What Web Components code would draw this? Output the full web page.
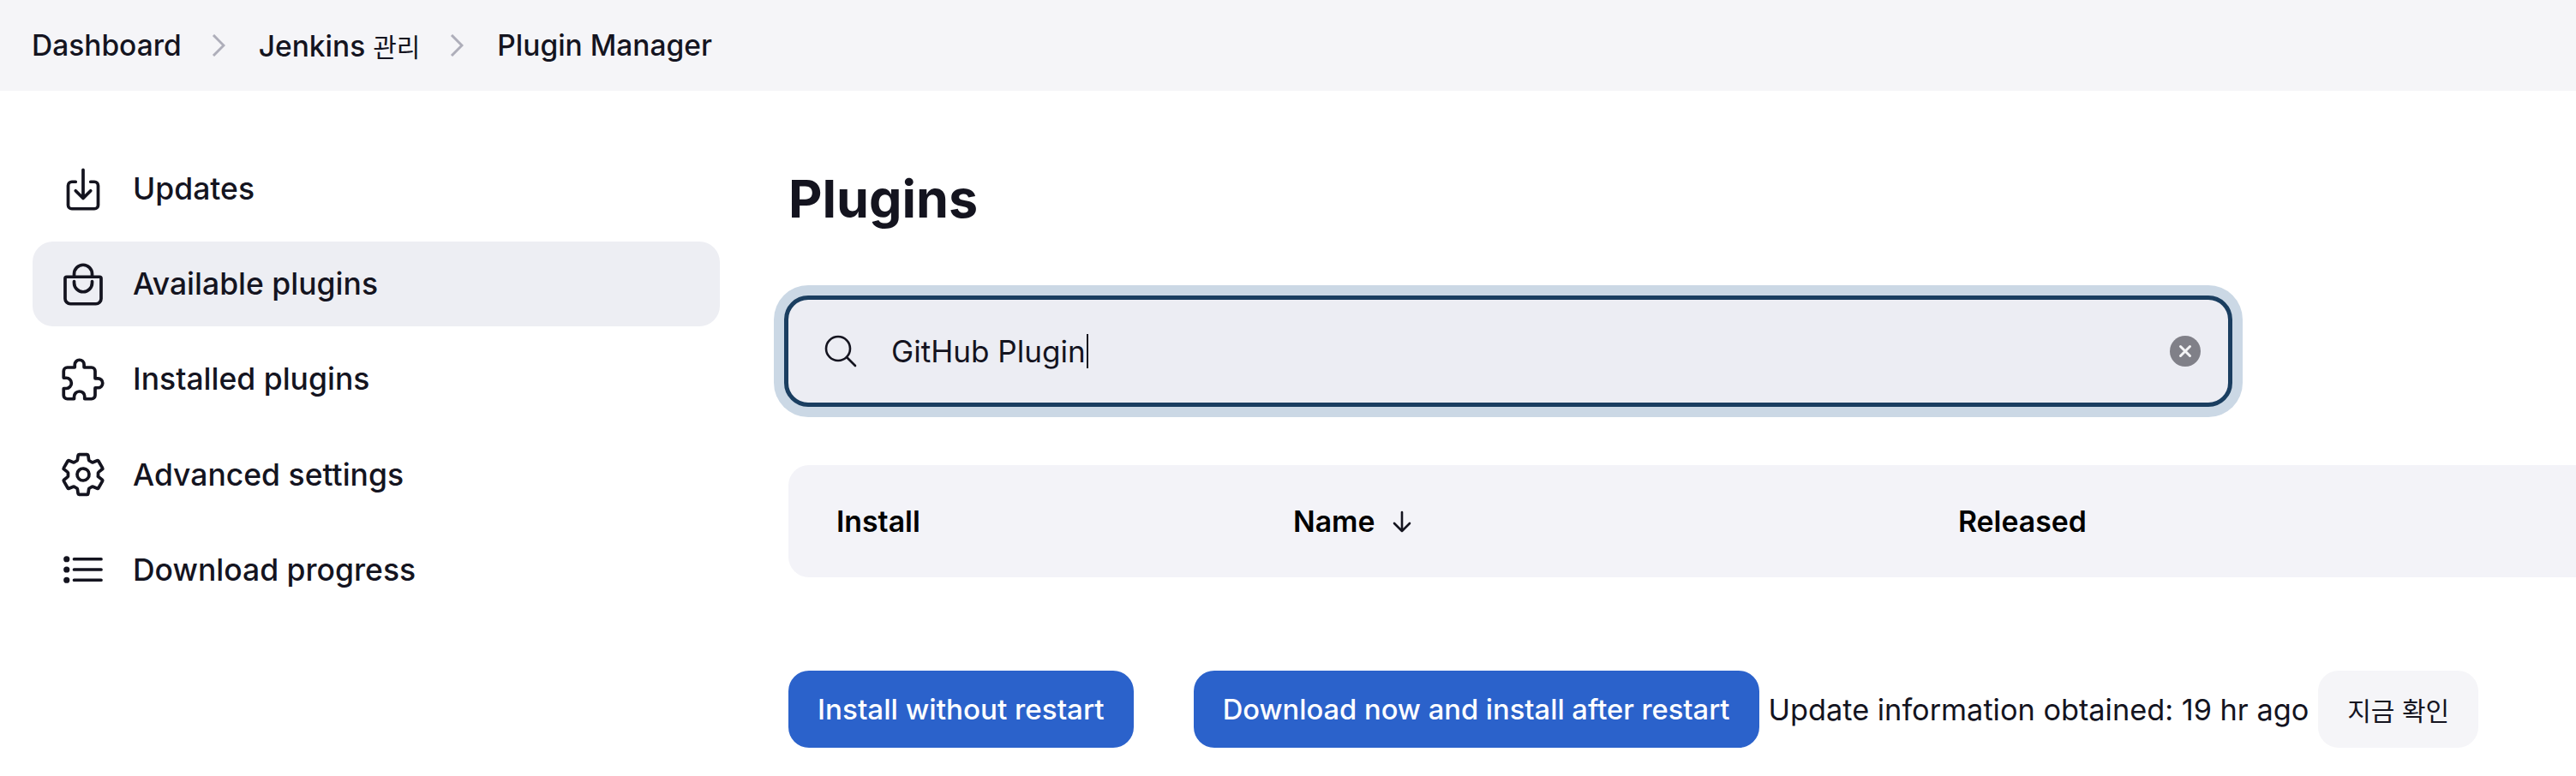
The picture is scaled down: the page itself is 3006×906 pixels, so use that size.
<!DOCTYPE html>
<html lang="en">
<head>
<meta charset="utf-8">
<title>Plugin Manager</title>
<style>
    html, body {
        margin: 0;
        overflow: hidden;
        background: #fff;
        color: #14141f;
        font-family: Inter, "Noto Sans CJK KR", sans-serif;
        font-size: 34px;
    }
</style>
</head>
<body>
<app-breadcrumbs>
    <bread-crumb>Dashboard</bread-crumb>
    <bread-crumb sep>Jenkins <span class="ko">관리</span></bread-crumb>
    <bread-crumb sep>Plugin Manager</bread-crumb>
</app-breadcrumbs>
<app-page>
    <side-nav slot="side">
        <nav-item icon="download">Updates</nav-item>
        <nav-item icon="bag" active>Available plugins</nav-item>
        <nav-item icon="puzzle">Installed plugins</nav-item>
        <nav-item icon="settings">Advanced settings</nav-item>
        <nav-item icon="list">Download progress</nav-item>
    </side-nav>
    <plugin-title>Plugins</plugin-title>
    <search-box>GitHub Plugin</search-box>
    <table-head></table-head>
    <action-bar>
        <app-button primary>Install without restart</app-button>
        <app-button primary class="second">Download now and install after restart</app-button>
        <span class="info">Update information obtained: 19 hr ago</span>
        <app-button class="check">지금 확인</app-button>
    </action-bar>
</app-page>
<script>
// outline icons, all drawn on a 512 grid
const ICONS = {
    download: `<path d="M336 176h40a40 40 0 0140 40v208a40 40 0 01-40 40H136a40 40 0 01-40-40V216a40 40 0 0140-40h40"/><path d="M176 272l80 80 80-80M256 48v288"/>`,
    bag: `<path d="M80 176a16 16 0 00-16 16v216c0 30.24 25.76 56 56 56h272c30.24 0 56-24.51 56-54.75V192a16 16 0 00-16-16zM160 176v-32a96 96 0 0196-96h0a96 96 0 0196 96v32"/><path d="M160 224v16a96 96 0 0096 96h0a96 96 0 0096-96v-16"/>`,
    puzzle: `<path d="M413.66 246.1H386a2 2 0 01-2-2v-77.24A38.86 38.86 0 00345.14 128H267.9a2 2 0 01-2-2V98.34c0-27.14-21.5-49.86-48.64-50.33a49.53 49.53 0 00-50.4 49.51V126a2 2 0 01-2 2H87.62A39.74 39.74 0 0048 167.62V238a2 2 0 002 2h26.91c29.37 0 53.68 25.48 54.09 54.85.42 29.87-23.51 57.15-53.29 57.15H50a2 2 0 00-2 2v70.38A39.74 39.74 0 0087.62 464H158a2 2 0 002-2v-20.93c0-30.28 24.75-56.35 55-57.06 30.1-.7 57 20.31 57 50.28V462a2 2 0 002 2h71.14A38.86 38.86 0 00384 425.14v-78a2 2 0 012-2h28.48c27.63 0 49.52-22.67 49.52-50.4s-23.2-48.64-50.34-48.64z"/>`,
    settings: `<path d="M262.29 192.31a64 64 0 1057.4 57.4 64.13 64.13 0 00-57.4-57.4zM416.39 256a154.34 154.34 0 01-1.53 20.79l45.21 35.46a10.81 10.81 0 012.45 13.75l-42.77 74a10.81 10.81 0 01-13.14 4.59l-44.9-18.08a16.11 16.11 0 00-15.17 1.75A164.48 164.48 0 01325 400.8a15.94 15.94 0 00-8.82 12.14l-6.73 47.89a11.08 11.08 0 01-10.68 9.17h-85.54a11.11 11.11 0 01-10.69-8.87l-6.72-47.82a16.07 16.07 0 00-9-12.22 155.3 155.3 0 01-21.46-12.57 16 16 0 00-15.11-1.71l-44.89 18.07a10.81 10.81 0 01-13.14-4.58l-42.77-74a10.8 10.8 0 012.45-13.75l38.21-30a16.05 16.05 0 006-14.08c-.36-4.17-.58-8.33-.58-12.5s.21-8.27.58-12.35a16 16 0 00-6.07-13.94l-38.19-30A10.81 10.81 0 0149.48 186l42.77-74a10.81 10.81 0 0113.14-4.59l44.9 18.08a16.11 16.11 0 0015.17-1.75A164.48 164.48 0 01187 111.2a15.94 15.94 0 008.82-12.14l6.73-47.89A11.08 11.08 0 01213.23 42h85.54a11.11 11.11 0 0110.69 8.87l6.72 47.82a16.07 16.07 0 009 12.22 155.3 155.3 0 0121.46 12.57 16 16 0 0015.11 1.71l44.89-18.07a10.81 10.81 0 0113.14 4.58l42.77 74a10.8 10.8 0 01-2.45 13.75l-38.21 30a16.05 16.05 0 00-6.05 14.08c.33 4.14.55 8.3.55 12.47z"/>`,
    list: `<path d="M160 144h288M160 256h288M160 368h288"/><circle cx="80" cy="144" r="16"/><circle cx="80" cy="256" r="16"/><circle cx="80" cy="368" r="16"/>`
};

class AppBreadcrumbs extends HTMLElement {
    constructor() {
        super();
        this.attachShadow({ mode: 'open' });
        this.shadowRoot.innerHTML = `
            <style>
                :host {
                    display: flex;
                    align-items: center;
                    height: 106px;
                    padding-left: 37px;
                    background: #f5f5f8;
                    font-size: 33.5px;
                }
            </style>
            <slot></slot>
        `;
    }
}

class BreadCrumb extends HTMLElement {
    constructor() {
        super();
        this.attachShadow({ mode: 'open' });
        this.shadowRoot.innerHTML = `
            <style>
                :host {
                    display: flex;
                    align-items: center;
                    font-weight: 500;
                    white-space: pre;
                }
                svg {
                    display: none;
                    width: 16px;
                    height: 26px;
                    margin: 0 39px 0 35px;
                    fill: none;
                    stroke: #aeaeba;
                    stroke-width: 3;
                }
                :host([sep]) svg { display: block; }
                ::slotted(.ko) { font-size: 30px; font-weight: 400; }
            </style>
            <svg viewBox="0 0 16 26"><path d="M2 1l12 12L2 25"/></svg>
            <div><slot></slot></div>
        `;
    }
}

class AppPage extends HTMLElement {
    constructor() {
        super();
        this.attachShadow({ mode: 'open' });
        this.shadowRoot.innerHTML = `
            <style>
                :host {
                    display: grid;
                    grid-template-columns: 802px 1fr;
                    column-gap: 80px;
                    padding: 65px 0 0 38px;
                }
                main { min-width: 0; }
            </style>
            <slot name="side"></slot>
            <main><slot></slot></main>
        `;
    }
}

class SideNav extends HTMLElement {
    constructor() {
        super();
        this.attachShadow({ mode: 'open' });
        this.shadowRoot.innerHTML = `
            <style>
                :host {
                    display: grid;
                    grid-auto-rows: 99px;
                    row-gap: 12.2px;
                    align-content: start;
                }
            </style>
            <slot></slot>
        `;
    }
}

class NavItem extends HTMLElement {
    constructor() {
        super();
        this.attachShadow({ mode: 'open' });
        const icon = ICONS[this.getAttribute('icon')] || '';
        this.shadowRoot.innerHTML = `
            <style>
                :host {
                    display: flex;
                    align-items: center;
                    gap: 30px;
                    padding-left: 31px;
                    border-radius: 24px;
                    font-size: 35.5px;
                    font-weight: 500;
                    white-space: nowrap;
                }
                :host([active]) { background: #edeef3; }
                svg {
                    width: 56px;
                    height: 56px;
                    flex: none;
                    fill: none;
                    stroke: #14141f;
                    stroke-width: 34;
                    stroke-linecap: round;
                    stroke-linejoin: round;
                }
            </style>
            <svg viewBox="0 0 512 512">${icon}</svg>
            <slot></slot>
        `;
    }
}

class PluginTitle extends HTMLElement {
    constructor() {
        super();
        this.attachShadow({ mode: 'open' });
        this.shadowRoot.innerHTML = `
            <style>
                :host {
                    display: block;
                    height: 174px;
                    font-size: 61px;
                    font-weight: 700;
                    line-height: 122px;
                }
            </style>
            <slot></slot>
        `;
    }
}

class SearchBox extends HTMLElement {
    constructor() {
        super();
        this.attachShadow({ mode: 'open' });
        this.shadowRoot.innerHTML = `
            <style>
                :host {
                    display: flex;
                    align-items: center;
                    box-sizing: border-box;
                    width: 1690px;
                    height: 130px;
                    margin: 0 0 68px -5px;
                    padding: 0 32px 0 42px;
                    border: 5px solid #1a3e60;
                    border-radius: 28px;
                    background: #ecedf3;
                    box-shadow: 0 0 0 12px #cbd8e5;
                    font-size: 35.1px;
                    font-weight: 400;
                }
                .glass {
                    width: 38px;
                    height: 38px;
                    margin-right: 40px;
                    flex: none;
                    fill: none;
                    stroke: #14141f;
                    stroke-width: 2.6;
                    stroke-linecap: round;
                }
                .caret {
                    width: 2px;
                    height: 40px;
                    margin-left: 1px;
                    background: #14141f;
                }
                .clear {
                    width: 36px;
                    height: 36px;
                    margin-left: auto;
                    flex: none;
                }
            </style>
            <svg class="glass" viewBox="0 0 38 38"><circle cx="16" cy="16" r="14"/><path d="M26.5 26.5L36 36"/></svg>
            <slot></slot>
            <span class="caret"></span>
            <svg class="clear" viewBox="0 0 36 36">
                <circle cx="18" cy="18" r="18" fill="#808088"/>
                <path d="M12.5 12.5l11 11M23.5 12.5l-11 11" stroke="#f4f4f6" stroke-width="3" stroke-linecap="round"/>
            </svg>
        `;
    }
}

class TableHead extends HTMLElement {
    constructor() {
        super();
        this.attachShadow({ mode: 'open' });
        this.shadowRoot.innerHTML = `
            <style>
                :host {
                    display: grid;
                    grid-template-columns: 533px 776px 1fr;
                    align-items: center;
                    height: 131px;
                    padding-left: 56px;
                    border-radius: 24px 0 0 24px;
                    background: #f3f3f8;
                    color: #000;
                    font-size: 33.8px;
                    font-weight: 600;
                }
                .name { display: flex; align-items: center; gap: 19px; }
                svg {
                    width: 26px;
                    height: 26px;
                    fill: none;
                    stroke: #14141f;
                    stroke-width: 2.6;
                    stroke-linecap: round;
                    stroke-linejoin: round;
                }
            </style>
            <span>Install</span>
            <span class="name">Name
                <svg viewBox="0 0 26 26"><path d="M13 2v22M4 15l9 9 9-9"/></svg>
            </span>
            <span>Released</span>
        `;
    }
}

class ActionBar extends HTMLElement {
    constructor() {
        super();
        this.attachShadow({ mode: 'open' });
        this.shadowRoot.innerHTML = `
            <style>
                :host {
                    display: flex;
                    align-items: center;
                    gap: 11px;
                    margin-top: 109px;
                    font-size: 34.3px;
                    white-space: nowrap;
                }
                ::slotted(.second) { margin-left: 59px; font-size: 32.7px; }
                ::slotted(.check) { font-size: 30px; }
            </style>
            <slot></slot>
        `;
    }
}

class AppButton extends HTMLElement {
    constructor() {
        super();
        this.attachShadow({ mode: 'open' });
        this.shadowRoot.innerHTML = `
            <style>
                :host {
                    display: flex;
                    align-items: center;
                    height: 90px;
                    padding: 0 34px;
                    border-radius: 24px;
                    background: #f5f5f8;
                    font-size: 33.2px;
                    font-weight: 400;
                }
                :host([primary]) {
                    background: #2b62cb;
                    color: #fff;
                    font-weight: 500;
                }
            </style>
            <slot></slot>
        `;
    }
}

customElements.define('app-breadcrumbs', AppBreadcrumbs);
customElements.define('bread-crumb', BreadCrumb);
customElements.define('app-page', AppPage);
customElements.define('side-nav', SideNav);
customElements.define('nav-item', NavItem);
customElements.define('plugin-title', PluginTitle);
customElements.define('search-box', SearchBox);
customElements.define('table-head', TableHead);
customElements.define('action-bar', ActionBar);
customElements.define('app-button', AppButton);
</script>
</body>
</html>
